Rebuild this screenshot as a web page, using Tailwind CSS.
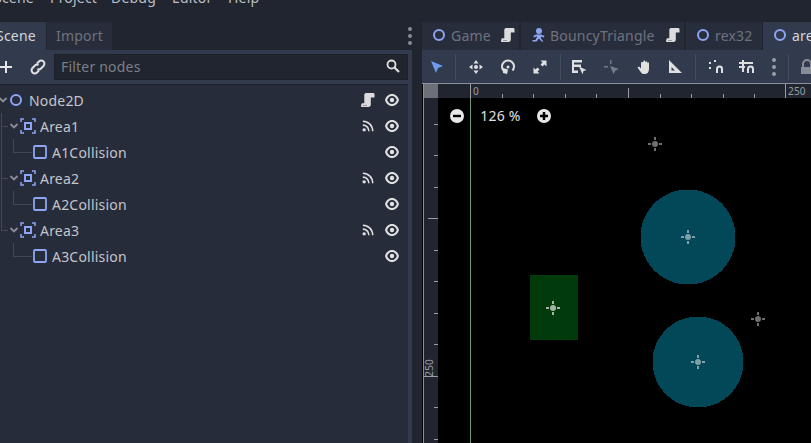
<!DOCTYPE html>
<html lang="en">
<head>
<meta charset="UTF-8">
<title>Godot editor</title>
<script src="https://cdn.jsdelivr.net/npm/@tailwindcss/browser@4"></script>
</head>
<body class="m-0 bg-[#21252f]">
<svg class="absolute w-0 h-0">
  <symbol id="eye" viewBox="0 0 16 14"><path fill="#e0e0e0" fill-rule="evenodd" d="M8 1C4.500 1 2 3.500 1 7c1 3.500 3.500 6 7 6s6-2.500 7-6C14 3.500 11.500 1 8 1zM8 3c2.600 0 4 2 4.800 4C12 9 10.600 11 8 11S4 9 3.200 7C4 5 5.400 3 8 3zM8 4.800a2.200 2.200 0 1 0 0 4.400 2.200 2.200 0 0 0 0-4.400z"/></symbol>
  <symbol id="script" viewBox="0 0 16 16"><path fill="#dcdcdc" d="M6 1C4.800 1 4.300 2 4.300 3V11.200H2.200C1.500 11.200 1 13.500 1 14.200c0 .5.500.8 1 .8H8.500C10 15 10.800 14 10.800 12.800V5.500H14.500V2.500C14.500 1.500 14 1 13 1Z"/><path fill="#9a9a9a" d="M3 13h4v1H3z"/></symbol>
  <symbol id="rss" viewBox="0 0 14 14"><circle cx="2.500" cy="11.500" r="2" fill="#e0e0e0"/><path fill="none" stroke="#e0e0e0" stroke-width="1.800" d="M1 6c4 0 7 3 7 7M1 1.500c6.500 0 11.500 5 11.500 11.500"/></symbol>
  <symbol id="area" viewBox="0 0 16 16"><path fill="none" stroke="#8da5f3" stroke-width="1.500" d="M1 4V1H4M12 1h3v3M15 12v3h-3M4 15H1v-3"/><rect x="5" y="5" width="6" height="6" fill="none" stroke="#8da5f3" stroke-width="2"/></symbol>
  <symbol id="box" viewBox="0 0 16 16"><rect x="2" y="2" width="12" height="12" rx="1" fill="none" stroke="#8da5f3" stroke-width="1.800"/></symbol>
  <symbol id="node" viewBox="0 0 16 16"><circle cx="8" cy="8" r="5" fill="none" stroke="#8da5f3" stroke-width="2"/></symbol>
  <symbol id="chev" viewBox="0 0 10 10"><path fill="none" stroke="#8b8e96" stroke-width="1.800" d="M1.500 3 5 6.500 8.500 3"/></symbol>
</svg>

<div class="w-[811px] h-[443px] overflow-hidden flex flex-col font-['Noto_Sans',sans-serif] text-[14px] tracking-[0.2px] bg-[#21252f]">

  <!-- menu bar, cut off at the top -->
  <div class="h-[22px] shrink-0 flex items-end text-[#bcbfc5] leading-none">
    <div class="flex -ml-[6px] mb-[17px] h-[14px] items-center">
      <span class="w-[56px]">Scene</span>
      <span class="w-[61px]">Project</span>
      <span class="w-[61px]">Debug</span>
      <span class="w-[56px]">Editor</span>
      <span>Help</span>
    </div>
  </div>

  <div class="flex flex-1 min-h-0">
    <!-- scene dock -->
    <div class="w-[412px] shrink-0 flex flex-col">
      <div class="h-[28px] shrink-0 flex items-stretch">
        <div class="w-[46px] pb-[2px] bg-[#323a4d] text-[#d4d6da] flex items-center overflow-hidden"><span class="-ml-[4px]">Scene</span></div>
        <div class="w-[65px] pb-[2px] ml-[1px] bg-[#282d3c] text-[#6e727d] flex items-center justify-center">Import</div>
        <div class="ml-auto w-[4px] flex flex-col justify-center gap-[3px]">
          <span class="w-[4px] h-[4px] rounded-full bg-[#8a8c93]"></span>
          <span class="w-[4px] h-[4px] rounded-full bg-[#8a8c93]"></span>
          <span class="w-[4px] h-[4px] rounded-full bg-[#8a8c93]"></span>
        </div>
      </div>
      <div class="flex-1 bg-[#323a4d] flex flex-col pr-[4px]">
        <div class="h-[34px] shrink-0 flex items-center">
          <svg class="ml-[-2px] w-[16px] h-[16px]" viewBox="0 0 16 16"><path stroke="#e6e6e6" stroke-width="2" d="M8 2v12M2 8h12"/></svg>
          <svg class="ml-[16px] w-[16px] h-[16px]" viewBox="0 0 16 16"><path fill="none" stroke="#e0e0e0" stroke-width="2" d="M7 4.500 9 2.500a3 3 0 0 1 4.500 4.500L11 9.500a3 3 0 0 1-3.500.5M9 11.500 7 13.500a3 3 0 0 1-4.500-4.500L5 6.500a3 3 0 0 1 3.500-.5"/></svg>
          <div class="ml-[8px] flex-1 h-[26px] pb-[2px] bg-[#21252f] border border-[#1d2029] flex items-center pl-[6px] pr-[7px] text-[#7b7f89]">
            <span class="flex-1">Filter nodes</span>
            <svg class="w-[14px] h-[14px]" viewBox="0 0 14 14"><circle cx="5.500" cy="5.500" r="4" fill="none" stroke="#e0e0e0" stroke-width="1.800"/><path stroke="#e0e0e0" stroke-width="2.200" d="M8.500 8.500 13 13"/></svg>
          </div>
        </div>
        <div class="flex-1 bg-[#272c3b] border-t border-[#1f232e] pt-[2px] text-[#c3c5ca] relative">
          <svg class="absolute left-0 top-0 w-[40px] h-[200px]" viewBox="0 0 40 200"><path fill="none" stroke="#424857" d="M1.500 28V146M1.500 41.500H8M1.500 93.500H8M1.500 145.500H8M13.500 54V67.500H32M13.500 106V119.500H32M13.500 158V171.500H32"/></svg>

          <div class="h-[26px] flex items-center relative">
            <svg class="absolute left-[-2px] w-[10px] h-[10px]"><use href="#chev"/></svg>
            <svg class="ml-[8px] w-[16px] h-[16px]"><use href="#node"/></svg>
            <span class="ml-[5px]">Node2D</span>
            <svg class="ml-auto w-[16px] h-[16px]"><use href="#script"/></svg>
            <svg class="ml-[8px] mr-[8px] w-[16px] h-[14px]"><use href="#eye"/></svg>
          </div>
          <div class="h-[26px] flex items-center relative">
            <svg class="absolute left-[9px] w-[10px] h-[10px]"><use href="#chev"/></svg>
            <svg class="ml-[20px] w-[16px] h-[16px]"><use href="#area"/></svg>
            <span class="ml-[4px]">Area1</span>
            <svg class="ml-auto w-[12px] h-[12px] mr-[2px]"><use href="#rss"/></svg>
            <svg class="ml-[8px] mr-[8px] w-[16px] h-[14px]"><use href="#eye"/></svg>
          </div>
          <div class="h-[26px] flex items-center">
            <svg class="ml-[32px] w-[16px] h-[16px]"><use href="#box"/></svg>
            <span class="ml-[4px]">A1Collision</span>
            <svg class="ml-auto mr-[8px] w-[16px] h-[14px]"><use href="#eye"/></svg>
          </div>
          <div class="h-[26px] flex items-center relative">
            <svg class="absolute left-[9px] w-[10px] h-[10px]"><use href="#chev"/></svg>
            <svg class="ml-[20px] w-[16px] h-[16px]"><use href="#area"/></svg>
            <span class="ml-[4px]">Area2</span>
            <svg class="ml-auto w-[12px] h-[12px] mr-[2px]"><use href="#rss"/></svg>
            <svg class="ml-[8px] mr-[8px] w-[16px] h-[14px]"><use href="#eye"/></svg>
          </div>
          <div class="h-[26px] flex items-center">
            <svg class="ml-[32px] w-[16px] h-[16px]"><use href="#box"/></svg>
            <span class="ml-[4px]">A2Collision</span>
            <svg class="ml-auto mr-[8px] w-[16px] h-[14px]"><use href="#eye"/></svg>
          </div>
          <div class="h-[26px] flex items-center relative">
            <svg class="absolute left-[9px] w-[10px] h-[10px]"><use href="#chev"/></svg>
            <svg class="ml-[20px] w-[16px] h-[16px]"><use href="#area"/></svg>
            <span class="ml-[4px]">Area3</span>
            <svg class="ml-auto w-[12px] h-[12px] mr-[2px]"><use href="#rss"/></svg>
            <svg class="ml-[8px] mr-[8px] w-[16px] h-[14px]"><use href="#eye"/></svg>
          </div>
          <div class="h-[26px] flex items-center">
            <svg class="ml-[32px] w-[16px] h-[16px]"><use href="#box"/></svg>
            <span class="ml-[4px]">A3Collision</span>
            <svg class="ml-auto mr-[8px] w-[16px] h-[14px]"><use href="#eye"/></svg>
          </div>
        </div>
      </div>
    </div>

    <!-- main screen -->
    <div class="ml-[10px] flex-1 min-w-0 flex flex-col overflow-hidden">
      <!-- scene tabs -->
      <div class="h-[28px] shrink-0 flex text-[#6e727d] whitespace-nowrap">
        <div class="w-[97px] shrink-0 pb-[2px] bg-[#282d3c] flex items-center pl-[9px]">
          <svg class="w-[16px] h-[16px]"><use href="#node"/></svg>
          <span class="ml-[4px]">Game</span>
          <svg class="ml-auto mr-[3px] w-[16px] h-[16px]"><use href="#script"/></svg>
        </div>
        <div class="w-[163px] shrink-0 pb-[2px] ml-[2px] bg-[#282d3c] flex items-center pl-[9px]">
          <svg class="w-[16px] h-[16px]" viewBox="0 0 16 16"><g fill="#8da5f3"><circle cx="9" cy="4" r="3"/><path d="M6 7.500h5l3.500 1.500-.7 1.500-2.800-1v2l2.500 3H11.500L9 11.500 6.500 14.500H2.500V13H5.500L7 10V9.200L4 10.500 3.300 9z"/></g></svg>
          <span class="ml-[4px]">BouncyTriangle</span>
          <svg class="ml-auto mr-[3px] w-[16px] h-[16px]"><use href="#script"/></svg>
        </div>
        <div class="w-[76px] shrink-0 pb-[2px] ml-[2px] bg-[#282d3c] flex items-center pl-[9px]">
          <svg class="w-[16px] h-[16px]"><use href="#node"/></svg>
          <span class="ml-[4px]">rex32</span>
        </div>
        <div class="w-[80px] shrink-0 pb-[2px] ml-[1px] bg-[#323a4d] text-[#d4d6da] flex items-center pl-[9px]">
          <svg class="shrink-0 w-[16px] h-[16px]"><use href="#node"/></svg>
          <span class="ml-[4px]">area</span>
        </div>
      </div>

      <!-- canvas toolbar -->
      <div class="h-[33px] shrink-0 bg-[#323a4d] flex items-center">
        <svg class="shrink-0 ml-[7px] w-[16px] h-[16px]" viewBox="0 0 16 16"><path fill="#6e9bf0" d="M2 2 14 7 9 9 7 14z"/></svg>
        <span class="shrink-0 ml-[10px] w-px h-[26px] bg-[#464d60]"></span>
        <svg class="shrink-0 ml-[12px] w-[16px] h-[16px]" viewBox="0 0 16 16"><g fill="#e0e0e0"><path d="M8 1 10.500 4.500h-5zM8 15 5.500 11.500h5zM1 8 4.500 5.500v5zM15 8 11.500 10.500v-5z"/><circle cx="8" cy="8" r="2"/></g></svg>
        <svg class="shrink-0 ml-[16px] w-[16px] h-[16px]" viewBox="0 0 16 16"><path fill="none" stroke="#e0e0e0" stroke-width="2" d="M3.500 11.500a6 6 0 1 1 9 0"/><circle cx="8" cy="8" r="1.500" fill="#e0e0e0"/><path fill="#e0e0e0" d="M3 9l5 1.500L7 15 3 14z"/></svg>
        <svg class="shrink-0 ml-[16px] w-[16px] h-[16px]" viewBox="0 0 16 16"><path fill="#e0e0e0" d="M8.500 1.500H14.500V7.500L12.500 5.500 10.500 7.500 8.500 5.500 10.500 3.500zM1.500 8.500 3.500 10.500 5.500 8.500 7.500 10.500 5.500 12.500 7.500 14.500H1.500z"/></svg>
        <span class="shrink-0 ml-[12px] w-px h-[26px] bg-[#464d60]"></span>
        <svg class="shrink-0 ml-[10px] w-[16px] h-[16px]" viewBox="0 0 16 16"><path fill="#e0e0e0" d="M1 1h10v2.500H3v2h7V8H3v3.500h4V14H1z"/><path fill="#e0e0e0" d="M8 7.500l7.500 3.500-3 1-1 3.200z"/></svg>
        <svg class="shrink-0 ml-[17px] w-[16px] h-[16px] opacity-40" viewBox="0 0 16 16"><path fill="#e0e0e0" d="M0 7h4v1.500H0zM6 1h1.500v4H6zM6 7l9 3-3.500 1.500L9.500 15z"/></svg>
        <svg class="shrink-0 ml-[16px] w-[16px] h-[16px]" viewBox="0 0 16 16"><path fill="#e0e0e0" d="M6 3h1.500V1.500H9V3h.2V2.500h2V4h.3V3.500h1.500V10c0 3-1.500 5-4.500 5S5 13.500 4 12L1.500 8.500 3 7.500l2 2V3.500z"/></svg>
        <svg class="shrink-0 ml-[15px] w-[16px] h-[16px]" viewBox="0 0 16 16"><path fill="#e0e0e0" fill-rule="evenodd" d="M2 1 15 14H2zM4.500 8v3.500H8z"/></svg>
        <span class="shrink-0 ml-[12px] w-px h-[26px] bg-[#464d60]"></span>
        <svg class="shrink-0 ml-[12px] w-[16px] h-[16px]" viewBox="0 0 16 16"><path fill="none" stroke="#e0e0e0" stroke-width="2" d="M9 14V10a2.500 2.500 0 0 1 5 0v4"/><path fill="#e0e0e0" d="M1 3h2v2H1zM6 1h2v2H6zM1 8h2v2H1z"/></svg>
        <svg class="shrink-0 ml-[15px] w-[16px] h-[16px]" viewBox="0 0 16 16"><path fill="none" stroke="#e0e0e0" stroke-width="2" d="M9 14V10a2.500 2.500 0 0 1 5 0v4M4 1v12M0 4h14M0 8h6"/></svg>
        <span class="shrink-0 ml-[17px] w-[4px] flex flex-col gap-[3px]">
          <span class="w-[4px] h-[4px] rounded-full bg-[#9a9ca3]"></span>
          <span class="w-[4px] h-[4px] rounded-full bg-[#9a9ca3]"></span>
          <span class="w-[4px] h-[4px] rounded-full bg-[#9a9ca3]"></span>
        </span>
        <span class="shrink-0 ml-[12px] w-px h-[26px] bg-[#464d60]"></span>
        <svg class="shrink-0 ml-[10px] w-[16px] h-[16px] opacity-50" viewBox="0 0 16 16"><path fill="none" stroke="#e0e0e0" stroke-width="2" d="M4 8V5a4 4 0 0 1 8 0v3"/><rect x="2" y="8" width="12" height="7" fill="#e0e0e0"/></svg>
      </div>

      <!-- viewport with rulers -->
      <div class="flex-1 relative bg-black overflow-hidden">
        <svg class="absolute left-0 top-0 w-[389px] h-[360px]" viewBox="422 83 389 360" shape-rendering="crispEdges">
          <rect x="423" y="84" width="388" height="14" fill="#21252f"/>
          <rect x="423" y="84" width="15" height="359" fill="#21252f"/>
          <rect x="424" y="84" width="14" height="14" fill="#6d7078"/>
          <path stroke="#8d9098" fill="none" d="M422 83.500H811M423.500 83V443"/>
          <path stroke="#9a9ca2" fill="none" d="M470.500 84V98M785.500 84V98M628.500 88V98M502.500 94V98M533.500 94V98M565.500 94V98M596.500 94V98M660.500 94V98M691.500 94V98M723.500 94V98M754.500 94V98
            M424 376.500H438M428 218.500H438M434 124.500H438M434 155.500H438M434 187.500H438M434 250.500H438M434 281.500H438M434 313.500H438M434 344.500H438M434 407.500H438M434 439.500H438"/>
          <path stroke="#6f9a7a" d="M470.500 98V443"/>
        </svg>
        <svg class="absolute left-0 top-0 w-[389px] h-[360px]" viewBox="422 83 389 360">
          <circle cx="688" cy="237" r="47.500" fill="#024858" shape-rendering="crispEdges"/>
          <circle cx="698" cy="362" r="45.500" fill="#024858" shape-rendering="crispEdges"/>
          <rect x="530" y="275" width="48" height="65" fill="#013a0b"/>
          <g fill="#6d6f70"><circle cx="655" cy="144" r="3"/><path d="M654 137h2v3h-2zM654 148h2v3h-2zM648 143h3v2h-3zM659 143h3v2h-3z"/></g>
          <g fill="#6d6f70"><circle cx="758" cy="319" r="3"/><path d="M757 312h2v3h-2zM757 323h2v3h-2zM751 318h3v2h-3zM762 318h3v2h-3z"/></g>
          <g fill="#7f9ea5"><circle cx="688" cy="237" r="3"/><path d="M687 230h2v3h-2zM687 241h2v3h-2zM681 236h3v2h-3zM692 236h3v2h-3z"/></g>
          <g fill="#7f9ea5"><circle cx="698" cy="362" r="3"/><path d="M697 355h2v3h-2zM697 366h2v3h-2zM691 361h3v2h-3zM702 361h3v2h-3z"/></g>
          <g fill="#a3b5a6"><circle cx="553" cy="308" r="3"/><path d="M552 301h2v3h-2zM552 312h2v3h-2zM546 307h3v2h-3zM557 307h3v2h-3z"/></g>
        </svg>
        <!-- ruler labels -->
        <span class="absolute left-[51px] top-[2px] text-[10px] leading-[12px] text-[#9a9da4]">0</span>
        <span class="absolute left-[366px] top-[2px] text-[10px] leading-[12px] text-[#9a9da4]">250</span>
        <span class="absolute left-[1px] top-[276px] text-[10px] leading-[12px] text-[#9a9da4] [writing-mode:vertical-rl] rotate-180">250</span>
        <!-- zoom widget -->
        <div class="absolute left-[28px] top-[23px] h-[20px] flex items-center text-[#e0e0e0]">
          <svg class="w-[14px] h-[14px]" viewBox="0 0 14 14"><circle cx="7" cy="7" r="7" fill="#e8e8e8"/><rect x="3" y="5.800" width="8" height="2.400" fill="#000"/></svg>
          <span class="w-[73px] text-center pb-[2px]">126 %</span>
          <svg class="w-[14px] h-[14px]" viewBox="0 0 14 14"><circle cx="7" cy="7" r="7" fill="#e8e8e8"/><path fill="#000" d="M3 5.800h2.800V3h2.400v2.800H11v2.400H8.200V11H5.800V8.200H3z"/></svg>
        </div>
      </div>
    </div>
  </div>
</div>
</body>
</html>
